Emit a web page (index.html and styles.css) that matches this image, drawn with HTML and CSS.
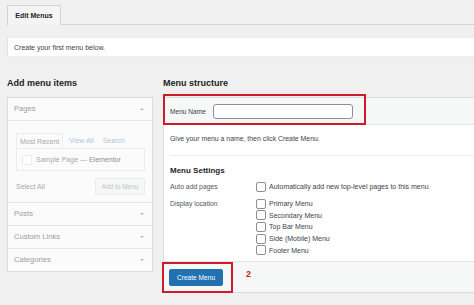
FILE: index.html
```
<!DOCTYPE html>
<html lang="en">
<head>
    <meta charset="UTF-8">
    <meta name="viewport" content="width=device-width, initial-scale=1.0">
    <title>Menus</title>
    <link rel="stylesheet" href="styles.css">
</head>
<body>
    <div class="page">
        <div class="tabs">
            <a class="tab">Edit Menus</a>
        </div>

        <div class="notice">Create your first menu below.</div>

        <div class="cols">
            <div class="left">
                <h3>Add menu items</h3>
                <div class="accordion">
                    <div class="acc-title">Pages <span class="arrow up"></span></div>
                    <div class="acc-body">
                        <div class="subtabs">
                            <span class="subtab active">Most Recent</span>
                            <span class="subtab">View All</span>
                            <span class="subtab">Search</span>
                        </div>
                        <div class="tabpanel">
                            <span class="cb faint"></span>
                            <span>Sample Page — <b>Elementor</b></span>
                        </div>
                        <div class="acc-actions">
                            <span>Select All</span>
                            <button class="btn-light">Add to Menu</button>
                        </div>
                    </div>
                    <div class="acc-title">Posts <span class="arrow"></span></div>
                    <div class="acc-title">Custom Links <span class="arrow"></span></div>
                    <div class="acc-title last">Categories <span class="arrow"></span></div>
                </div>
            </div>

            <div class="right">
                <h3>Menu structure</h3>
                <span class="mark mark-1">1</span>
                <div class="menu-box">
                    <div class="box-head">
                        <label class="name-label">Menu Name</label>
                        <input type="text" class="name-input">
                        <div class="highlight hl-1"></div>
                    </div>
                    <div class="box-body">
                        <p class="hint">Give your menu a name, then click Create Menu.</p>
                        <div class="settings">
                            <h4>Menu Settings</h4>
                            <div class="setting">
                                <div class="setting-label">Auto add pages</div>
                                <div class="setting-opts">
                                    <div class="opt"><span class="cb"></span>Automatically add new top-level pages to this menu</div>
                                </div>
                            </div>
                            <div class="setting">
                                <div class="setting-label">Display location</div>
                                <div class="setting-opts">
                                    <div class="opt"><span class="cb"></span>Primary Menu</div>
                                    <div class="opt"><span class="cb"></span>Secondary Menu</div>
                                    <div class="opt"><span class="cb"></span>Top Bar Menu</div>
                                    <div class="opt"><span class="cb"></span>Side (Mobile) Menu</div>
                                    <div class="opt"><span class="cb"></span>Footer Menu</div>
                                </div>
                            </div>
                        </div>
                    </div>
                    <div class="box-foot">
                        <button class="btn-primary">Create Menu</button>
                        <div class="highlight hl-2"></div>
                        <span class="mark mark-2">2</span>
                    </div>
                </div>
            </div>
        </div>
    </div>
</body>
</html>
```
FILE: styles.css
```
body {
    margin: 0;
    background-color: #f0f0f1;
    font-family: "Liberation Sans", Arial, sans-serif;
    color: #3c434a;
    font-size: 7px;
    overflow: hidden;
}
.page {
    padding: 5px 0 0 7px;
    width: 480px;
}
.tabs {
    height: 19px;
    border-bottom: 1px solid #d4d4d6;
}
.tab {
    display: inline-block;
    box-sizing: border-box;
    height: 20px;
    width: 54px;
    line-height: 19px;
    text-align: center;
    font-weight: bold;
    color: #1d2327;
    background: #f4f4f5;
    border: 1px solid #d4d4d6;
    border-bottom: none;
}
.notice {
    margin-top: 12px;
    height: 20px;
    line-height: 20px;
    padding-left: 6px;
    background: #fff;
    border-left: 1px solid #e2e2e4;
    border-top: 1px solid #ececee;
    border-bottom: 1px solid #ececee;
    box-sizing: border-box;
}
.cols {
    display: flex;
    gap: 10px;
}
h3 {
    margin: 20px 0 8px;
    font-size: 9px;
    line-height: 12px;
    color: #1d2327;
}
.left {
    width: 146px;
    flex: none;
}
.accordion {
    border: 1px solid #dcdcde;
    background: #fbfbfb;
    color: #a7aaad;
}
.acc-title {
    height: 22px;
    line-height: 22px;
    padding: 0 6px;
    border-bottom: 1px solid #e6e6e8;
    position: relative;
    color: #9a9ea3;
    font-size: 7.6px;
}
.acc-title.last {
    border-bottom: none;
}
.arrow {
    position: absolute;
    right: 8px;
    top: 10px;
    border-left: 2px solid transparent;
    border-right: 2px solid transparent;
    border-top: 2px solid #b5b8bb;
}
.arrow.up {
    border-top: none;
    border-bottom: 2px solid #b5b8bb;
}
.acc-body {
    padding: 12px 7px 7px 8px;
    border-bottom: 1px solid #e6e6e8;
}
.subtabs {
    display: flex;
    height: 15px;
    line-height: 15px;
}
.subtab {
    padding: 0 3px;
    margin-right: 3px;
    color: #aec7dc;
}
.subtab.active {
    color: #a7aaad;
    border: 1px solid #ececee;
    border-bottom: none;
    background: #fbfbfb;
}
.tabpanel {
    height: 21px;
    border: 1px solid #ececee;
    display: flex;
    align-items: center;
    gap: 4px;
    padding-left: 5px;
    color: #a7aaad;
}
.tabpanel b {
    font-weight: normal;
    color: #8c8f94;
}
.acc-actions {
    display: flex;
    justify-content: space-between;
    align-items: center;
    margin-top: 7px;
}
.btn-light {
    font-family: inherit;
    font-size: 6.5px;
    color: #c3c4c7;
    background: #f6f7f7;
    border: 1px solid #ececee;
    border-radius: 2px;
    height: 17px;
    width: 50px;
    padding: 0;
}
.right {
    flex: 1;
    position: relative;
}
.mark {
    position: absolute;
    color: #c8202f;
    font-size: 9px;
}
.mark-1 {
    left: 209px;
    top: 76px;
}
.menu-box {
    border: 1px solid #dcdcde;
    background: #fff;
    position: relative;
}
.box-head {
    height: 26px;
    background: #f6f7f7;
    border-bottom: 1px solid #e4e4e6;
    display: flex;
    align-items: center;
    padding-left: 6px;
    gap: 7px;
    position: relative;
}
.name-label {
    font-size: 6.6px;
    color: #3c434a;
}
.name-input {
    width: 140px;
    height: 15px;
    box-sizing: border-box;
    border: 1px solid #8c8f94;
    border-radius: 3px;
    margin: 0;
    background: #fff;
}
.highlight {
    position: absolute;
    border: 2px solid #cc1b2b;
    box-sizing: border-box;
}
.hl-1 {
    left: -1px;
    top: -4px;
    width: 203px;
    height: 31px;
}
.box-body {
    padding: 0 6px;
}
.hint {
    margin: 0;
    padding: 10px 0 13px;
    font-size: 6.9px;
    border-bottom: 1px solid #f0f0f1;
}
.settings h4 {
    margin: 10px 0 6px;
    font-size: 8px;
    color: #1d2327;
}
.setting {
    display: flex;
    margin-bottom: 5px;
}
.setting-label {
    width: 86px;
    font-size: 6.8px;
    color: #50575e;
    line-height: 11.7px;
}
.opt {
    display: flex;
    align-items: center;
    gap: 3px;
    height: 11.7px;
    font-size: 7px;
}
.cb {
    display: inline-block;
    width: 10px;
    height: 10px;
    box-sizing: border-box;
    border: 1px solid #8c8f94;
    border-radius: 2px;
    background: #fff;
    flex: none;
}
.cb.faint {
    border-color: #ececee;
}
.box-foot {
    height: 30px;
    margin-top: 2px;
    background: #f6f7f7;
    border-top: 1px solid #e4e4e6;
    display: flex;
    align-items: center;
    padding-left: 5px;
    position: relative;
}
.btn-primary {
    font-family: inherit;
    font-size: 6.6px;
    color: #fff;
    background: #2271b1;
    border: 1px solid #2271b1;
    border-radius: 2px;
    height: 17px;
    width: 54px;
    padding: 0;
}
.hl-2 {
    left: -2px;
    top: 0;
    width: 71px;
    height: 31px;
}
.mark-2 {
    left: 82px;
    top: 7px;
    font-weight: bold;
}
```
